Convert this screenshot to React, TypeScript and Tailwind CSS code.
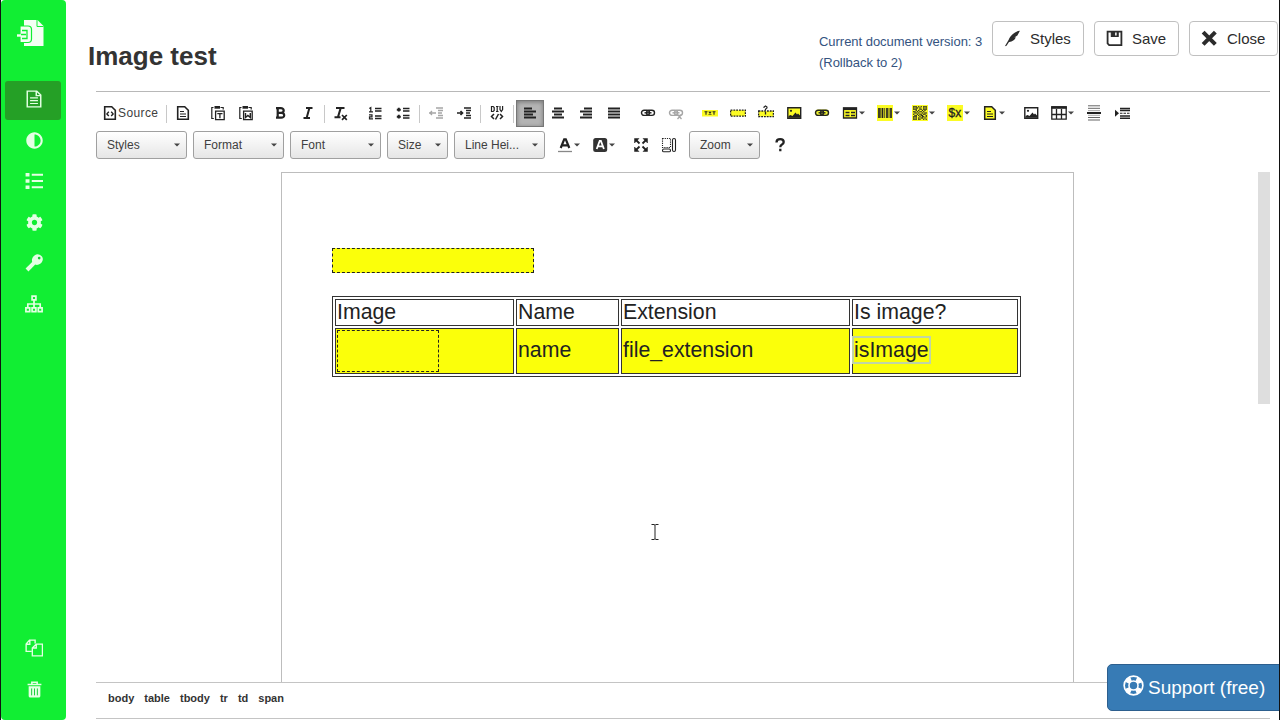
import React from 'react';
import { FaAdjust, FaCog } from 'react-icons/fa';

interface IconProps {
  children: React.ReactNode;
  className?: string;
}

function Icon({ children, className = 'w-4 h-4' }: IconProps) {
  return (
    <svg viewBox="0 0 16 16" className={`${className} shrink-0`} fill="none" stroke="currentColor">
      {children}
    </svg>
  );
}

function Caret() {
  return (
    <svg viewBox="0 0 6 4" className="w-1.5 h-1 shrink-0" fill="#444">
      <path d="M0 .5h6L3 3.5z" />
    </svg>
  );
}

interface ToolProps {
  children: React.ReactNode;
  active?: boolean;
  disabled?: boolean;
}

function Tool({ children, active, disabled }: ToolProps) {
  let stateClass = '';
  if (active) stateClass = 'bg-[#b4b4b4] border border-[#777] shadow-[inset_0_1px_4px_rgba(0,0,0,0.35)]';
  if (disabled) stateClass = 'opacity-40';
  return (
    <button className={`w-7 h-[27px] pb-px flex items-center justify-center shrink-0 ${stateClass}`}>
      <Icon>{children}</Icon>
    </button>
  );
}

function MenuTool({ children }: { children: React.ReactNode }) {
  return (
    <button className="w-[35px] h-[27px] pl-1.5 pb-px flex items-center gap-px shrink-0">
      <Icon>{children}</Icon>
      <Caret />
    </button>
  );
}

function Separator() {
  return (
    <div className="w-[5px] h-[18px] flex justify-center shrink-0">
      <div className="w-px h-full bg-[#c8c8c8]" />
    </div>
  );
}

function Combo({ label, width = 'w-[91px]' }: { label: string; width?: string }) {
  return (
    <button className={`${width} h-7 pl-2.5 pr-1.5 flex items-center justify-between shrink-0 text-xs text-[#404040] border border-[#a0a0a0] rounded-[3px] bg-linear-to-b from-white to-[#e6e6e6]`}>
      <span>{label}</span>
      <Caret />
    </button>
  );
}

const page = <path d="M2.700 1.700h7l3.600 3.600v9H2.700z" strokeWidth="1.600" />;
const clipboard = (
  <>
    <path d="M3.500 2.500H1.800v11h2M10.500 2.500h2.700v2" strokeWidth="1.200" />
    <path d="M4.500 1h5.500v2.700h-5.500z" fill="currentColor" stroke="none" />
    <path d="M5.600 6.100h8.600v8.600H5.600z" strokeWidth="1.300" />
  </>
);
const chain = (
  <g strokeWidth="1.400">
    <rect x="1.500" y="5.200" width="8" height="5.200" rx="2.600" />
    <rect x="6.500" y="5.200" width="8" height="5.200" rx="2.600" />
    <path d="M4.500 7.800h7" />
  </g>
);
const photo = (
  <>
    <path d="M1.800 2.700h12.900v10.600H1.800z" strokeWidth="1.400" />
    <circle cx="5" cy="5.800" r="1.100" fill="currentColor" stroke="none" />
    <path d="M2.500 12.800V11l2-1 2 1 3-3.500 1.500 2 1-1 2 2v2.300z" fill="currentColor" stroke="none" />
  </>
);
const indentLines = <path d="M8 3h7M10 5.500h5M10 8h4M10 10.500h5M8 13h7" strokeWidth="1.300" />;

// Black modules of the QR button, one string per row
const qrRows = [
  '11101010111',
  '10110100101',
  '11100110111',
  '00101001010',
  '11010110100',
  '01101001011',
  '10010110110',
  '01101011001',
  '11100101101',
  '10101011010',
  '11101100101',
];

function PrimaryToolbar() {
  return (
    <div className="h-[27px] flex items-center text-[#222]">
      <button className="w-[68px] h-full pl-1.5 pb-0.5 flex items-center shrink-0 text-xs tracking-[0.4px] text-[#404040]">
        <Icon className="w-4 h-4 text-[#222]">
          {page}
          <path d="M6.800 6.800L4.900 8.900l1.900 2.100M9.200 6.800l1.900 2.100-1.900 2.100" strokeWidth="1.400" />
        </Icon>
        <span>Source</span>
      </button>
      <Separator />
      <Tool>
        {page}
        <path d="M5 6.500h4M5 9h6M5 11.500h6" strokeWidth="1.200" />
      </Tool>
      <div className="flex ml-[7px]">
        <Tool>
          {clipboard}
          <path d="M7.300 8.600h5.200M9.900 8.600v4.600" strokeWidth="1.300" />
        </Tool>
        <Tool>
          {clipboard}
          <path d="M7.500 8v4.500l2.400-2 2.400 2V8" strokeWidth="1.400" />
        </Tool>
      </div>
      <div className="flex ml-1.5">
        <Tool>
          <path d="M4 3.200h4.700q3 0 3 2.300t-3 2.300H5.500M5.500 7.800h3.700q3 0 3 2.400t-3 2.400H4M5.700 3v9.500" strokeWidth="2.200" />
        </Tool>
        <Tool>
          <path d="M6 3h6.500M3.500 13H10M9.400 3L6.600 13" strokeWidth="2" />
        </Tool>
      </div>
      <Separator />
      <Tool>
        <path d="M3 3h8.500M1.500 12.300h6M7.700 3L5 12" strokeWidth="2.100" />
        <path d="M9 10l4.800 4.800M13.800 10L9 14.800" strokeWidth="1.700" />
      </Tool>
      <div className="flex ml-1.5">
        <Tool>
          <path d="M8 3.500h6.500M8 6h6.500M8 11h6.500M8 13.500h6.500" strokeWidth="1.500" />
          <path d="M2.300 3.500l1.500-1v4.300M2 6.800h4M2 9.800h3v2H2.500v2h3.500" strokeWidth="1.200" />
        </Tool>
        <Tool>
          <path d="M8 3.500h6.500M8 6h6.500M8 10.500h6.500M8 13h6.500" strokeWidth="1.500" />
          <path d="M1.800 4.700h4M1.800 11.700h4M3.800 2.800v3.800M3.800 9.800v3.800" strokeWidth="2" />
        </Tool>
      </div>
      <Separator />
      <Tool disabled>
        {indentLines}
        <path d="M1 8h7M4 6L2 8l2 2" strokeWidth="1.300" />
      </Tool>
      <Tool>
        {indentLines}
        <path d="M1 8h6M4.500 6l2 2-2 2" strokeWidth="1.700" />
      </Tool>
      <Separator />
      <Tool>
        <path d="M2.500 1.500v5h1.700l1-1v-3l-1-1zM7 1.500h2.500M8.200 1.500v5M7 6.500h2.500M11 1v3.500l1.300 2 1.300-2V1" strokeWidth="1.200" />
        <path d="M5 9l-2.500 2.500L5 14M11 9l2.500 2.500L11 14M9.500 9l-3 5.500" strokeWidth="1.500" />
      </Tool>
      <Separator />
      <Tool active>
        <path d="M2 3.500h8M2 6.500h12M2 9.500h9M2 12.500h12" strokeWidth="2" />
      </Tool>
      <Tool>
        <path d="M4 3.500h8M2 6.500h12M4 9.500h8M2 12.500h12" strokeWidth="2" />
      </Tool>
      <Tool>
        <path d="M6 3.500h8M2 6.500h12M5 9.500h9M2 12.500h12" strokeWidth="2" />
      </Tool>
      <Tool>
        <path d="M2 3.500h12M2 6.500h12M2 9.500h12M2 12.500h12" strokeWidth="2" />
      </Tool>
      <div className="flex ml-1.5">
        <Tool>{chain}</Tool>
        <Tool disabled>
          {chain}
          <path d="M9.500 9.500l4 4.500M13.500 9.500l-4 4.500" strokeWidth="1.300" />
        </Tool>
      </div>
      <div className="flex ml-1.5">
        <Tool>
          <path d="M0 5h16v6.500H0z" fill="#fbfb24" stroke="none" />
          <path d="M2.500 6.800h3M4 6.800v3M6.800 6.500l2.400 3.300M9.200 6.500L6.800 9.800M10.500 6.800h3M12 6.800v3" strokeWidth="1.100" />
        </Tool>
        <Tool>
          <path d="M.6 5.200h14.800v6H.6z" fill="#fbfb24" strokeWidth="1.300" strokeDasharray="1.800 1" />
        </Tool>
        <Tool>
          <path d="M.6 6h14.800v5.600H.6z" fill="#fbfb24" strokeWidth="1.300" strokeDasharray="1.800 1" />
          <path d="M7.500 9.500V7M7.500 5.500V4" strokeWidth="1.300" />
          <path d="M6 3V2l1.500-1L9 2v1L7.500 4" strokeWidth="1.100" />
        </Tool>
        <Tool>
          <path d="M2 3h12v10H2z" fill="#fbfb24" stroke="none" />
          {photo}
        </Tool>
        <Tool>
          <rect x="1" y="4.500" width="14" height="6.500" rx="3" fill="#f0f530" stroke="none" />
          {chain}
        </Tool>
        <MenuTool>
          <path d="M1.500 3h13v10h-13z" fill="#fbfb24" strokeWidth="1.300" />
          <path d="M1 3.800h14" strokeWidth="2.500" />
          <path d="M3.500 7.500h4M3.500 10.500h4M9 7.500h4M9 10.500h4" strokeWidth="1.500" />
        </MenuTool>
        <MenuTool>
          <path d="M0 0h16v16H0z" fill="#fbfb24" stroke="none" />
          <path d="M2 3v10M5.500 3v10M10 3v10M14 3v10" strokeWidth="1.700" />
          <path d="M3.700 3v10M7.700 3v10M12 3v10" strokeWidth=".8" />
        </MenuTool>
        <MenuTool>
          <path d="M0 0h16v16H0z" fill="#fbfb24" stroke="none" />
          <g fill="currentColor" stroke="none">
            {qrRows.map((row, y) =>
              row.split('').map((cell, x) =>
                cell === '1' ? <rect key={`${x}-${y}`} x={1.1 + x * 1.25} y={1.1 + y * 1.25} width="1.250" height="1.250" /> : null
              )
            )}
          </g>
        </MenuTool>
        <MenuTool>
          <path d="M0 0h16v16H0z" fill="#fbfb24" stroke="none" />
          <text x="1.500" y="12" fontSize="12" fontFamily="Liberation Sans, sans-serif" fill="currentColor" strokeWidth=".3">$x</text>
        </MenuTool>
        <MenuTool>
          <path d="M2.700 1.700h7l3.600 3.600v9H2.700z" fill="#fbfb24" strokeWidth="1.500" />
          <path d="M5 6.500h4M5 9h6M5 11.500h6" strokeWidth="1.200" />
        </MenuTool>
      </div>
      <div className="flex ml-1.5">
        <Tool>{photo}</Tool>
        <MenuTool>
          <path d="M.8 1.800h14.400v12.400H.8zM5.500 4v10M10.500 4v10M1 9.500h14" strokeWidth="1.300" />
          <path d="M.2 2.500h15.600" strokeWidth="2.600" />
        </MenuTool>
        <Tool>
          <path d="M2 .8h12M2 3.300h12M2 12.500h12M2 15h12" strokeWidth="1" stroke="#666" />
          <path d="M2 5.600h12M2 10.300h12" strokeWidth=".7" stroke="#888" />
          <path d="M1 8h14" strokeWidth="2" />
        </Tool>
        <Tool>
          <path d="M6 3.500h10M6 5.500h10M6 11h10M6 13.300h10" strokeWidth="1.500" />
          <path d="M6 8.200h10" strokeWidth="1.100" strokeDasharray="2.500 1" />
          <path d="M1 4.700L5 8.200 1 11.700z" fill="currentColor" stroke="none" />
        </Tool>
      </div>
    </div>
  );
}

function SecondaryToolbar() {
  return (
    <div className="h-7 mt-1 flex items-center text-[#222]">
      <div className="flex gap-1.5">
        <Combo label="Styles" />
        <Combo label="Format" />
        <Combo label="Font" />
        <Combo label="Size" width="w-[61px]" />
        <Combo label="Line Hei..." />
      </div>
      <div className="flex ml-1.5">
        <MenuTool>
          <path d="M3.700 11L7.200 2.300h1.600L12.300 11M5.200 8.300h5.600" strokeWidth="2.200" />
          <path d="M1 14.500h14" stroke="#888" strokeWidth="1.300" />
        </MenuTool>
        <MenuTool>
          <rect x="1.200" y="1" width="14" height="14" rx="2.500" fill="#333" stroke="none" />
          <path d="M4.700 12L7.700 4h1.200l3 8M5.800 9.400h5" stroke="#fff" strokeWidth="1.800" />
        </MenuTool>
      </div>
      <div className="flex ml-1.5">
        <Tool>
          <path d="M2.500 2.500l4 4M13.500 2.500l-4 4M2.500 13.500l4-4M13.500 13.500l-4-4" strokeWidth="1.800" />
          <path d="M1.500 1.500h4.500L1.500 6zM14.500 1.500V6L10 1.500zM1.500 14.500V10L6 14.500zM14.500 14.500H10l4.500-4.500z" fill="currentColor" strokeWidth=".5" />
        </Tool>
        <Tool>
          <path d="M1.500 1.500h8v9h-8z" strokeWidth="1.100" strokeDasharray="1.200 1" />
          <rect x="11.500" y="1.500" width="3" height="13" rx="1.500" strokeWidth="1.100" />
          <rect x="1.500" y="12" width="8" height="2.800" rx="1.400" strokeWidth="1.100" />
        </Tool>
      </div>
      <div className="flex ml-1.5">
        <Combo label="Zoom" width="w-[71px]" />
      </div>
      <div className="flex ml-1.5">
        <Tool>
          <path d="M4.500 5.500q0-3.300 3.700-3.300 3.500 0 3.500 2.900 0 1.500-1.700 2.400-1.700.9-1.700 2.700M8.300 11.800v2.400" strokeWidth="2.300" />
        </Tool>
      </div>
    </div>
  );
}

function SideItem({ children, active }: { children: React.ReactNode; active?: boolean }) {
  return (
    <a className={`w-14 pl-0.5 pb-[3px] flex items-center justify-center rounded-[3px] ${active ? 'h-[39px] mb-px bg-[#25a026]' : 'h-[41px]'}`}>
      {children}
    </a>
  );
}

function Sidebar() {
  return (
    <nav className="w-[65px] h-full flex flex-col items-center pr-px bg-[#11ee33] rounded-[4px] text-[#e4ffe4] shrink-0">
      <svg viewBox="0 0 28 28" className="w-7 h-7 mt-5 mb-[33px] mr-1.5 shrink-0" fill="#f4fff4">
        <path d="M8 0h13.500l6 6v20H8z" />
        <path d="M21 0v6.500h6.500" fill="none" stroke="#11ee33" strokeWidth="1" />
        <path d="M4 6h8q3.500 0 3.500 3.500v9.500q0 3.500-3.500 3.500H4z" stroke="#11ee33" strokeWidth="1.200" />
        <path d="M6 10.500h5v8H6M5 14.500h5" fill="none" stroke="#11ee33" strokeWidth="1.300" />
        <path d="M1 15.500h4" stroke="#f4fff4" strokeWidth="2.400" />
      </svg>
      <SideItem active>
        <Icon className="w-[18px] h-[18px]">
          <path d="M2 1h8.500L14 4.500V15H2zM10 1v4h4" strokeWidth="1.300" />
          <path d="M4.500 7h7M4.500 9.500h7M4.500 12h7" strokeWidth="1.100" />
        </Icon>
      </SideItem>
      <SideItem>
        <FaAdjust className="w-[17px] h-[17px]" />
      </SideItem>
      <SideItem>
        <Icon className="w-[18px] h-[18px]">
          <path d="M.5 2.500h3.500M.5 8h3.500M.5 13.500h3.500" strokeWidth="3.200" />
          <path d="M6 2.500h10M6 8h10M6 13.500h10" strokeWidth="1.700" />
        </Icon>
      </SideItem>
      <SideItem>
        <FaCog className="w-[17px] h-[17px]" />
      </SideItem>
      <SideItem>
        <Icon className="w-[18px] h-[18px]">
          <path d="M8.500 7.500L1.800 14.200" strokeWidth="3.600" />
          <ellipse cx="11" cy="5" rx="5" ry="4.500" fill="currentColor" stroke="none" transform="rotate(-35 11 5)" />
          <circle cx="12.600" cy="3.600" r="1.200" fill="#11ce33" stroke="none" />
        </Icon>
      </SideItem>
      <SideItem>
        <Icon className="w-[18px] h-[18px]">
          <path d="M6.300 1h3.400v3.400H6.300zM8 4.400v7M2.500 11V8h11v3M.8 11.500h3.400v3.300H.8zM6.300 11.500h3.400v3.300H6.300zM11.800 11.500h3.400v3.300h-3.400z" strokeWidth="1.500" />
        </Icon>
      </SideItem>
      <div className="mt-auto mb-[9px] flex flex-col">
        <SideItem>
          <Icon className="w-[18px] h-[18px]">
            <path d="M6 11H1V4.500L4 1h5v3M4.300 1v3.700H1" strokeWidth="1.200" />
            <path d="M6.500 8L10 4.500h5.500V15h-9zM10 4.500V8H6.500" strokeWidth="1.200" />
          </Icon>
        </SideItem>
        <SideItem>
          <Icon className="w-[17px] h-[17px]">
            <path d="M1.500 3.300h13M5.500 3V1.200h5V3" strokeWidth="1.500" />
            <path d="M2.500 5h11v9q0 1.500-1.500 1.500H4q-1.500 0-1.500-1.500z" fill="currentColor" stroke="none" />
            <path d="M5.300 7v6.500M8 7v6.500M10.700 7v6.500" stroke="#11ce33" strokeWidth=".9" />
          </Icon>
        </SideItem>
      </div>
    </nav>
  );
}

function HeaderButton({ label, width, children }: { label: string; width: string; children: React.ReactNode }) {
  return (
    <button className={`${width} h-[35px] pl-[11px] flex items-center gap-[9px] shrink-0 text-[15px] text-[#2c2c2c] bg-white border border-[#c0c0c0] rounded-[4px]`}>
      <Icon className="w-[17px] h-[17px]">{children}</Icon>
      <span className="pt-px">{label}</span>
    </button>
  );
}

function Header() {
  return (
    <header className="h-[92px] ml-[30px] mr-[9px] flex border-b border-[#b8b8b8]">
      <h1 className="-ml-[8px] mt-10 text-[26px] leading-8 font-bold text-[#333]">Image test</h1>
      <div className="ml-auto mt-[31px] w-[173px] shrink-0 text-[13px] leading-[21px] tracking-[-0.03px] text-[#34537f]">
        <p>Current document version: 3</p>
        <p>(Rollback to 2)</p>
      </div>
      <div className="mt-[21px] -mr-2 flex gap-2.5 shrink-0">
        <HeaderButton label="Styles" width="w-[92px]">
          <path d="M15 .8C10.500 1.200 6 4.800 4.300 9.500L.8 15.200l1.600-.3 2.300-3.700c3 .1 5.300-1.600 6.500-4.300l-1.500.2 2.900-2z" fill="currentColor" stroke="none" />
        </HeaderButton>
        <HeaderButton label="Save" width="w-[85px]">
          <path d="M1.500 1.500h13v12.700H3L1.500 12.700z" strokeWidth="1.700" />
          <path d="M5 1.500h6.500V6H5z" fill="currentColor" strokeWidth="1" />
          <path d="M9.300 2.300v2.800" stroke="#fff" strokeWidth="1.400" />
        </HeaderButton>
        <HeaderButton label="Close" width="w-[89px]">
          <path d="M2 2l11.500 11.500M13.500 2L2 13.500" strokeWidth="3.800" />
        </HeaderButton>
      </div>
    </header>
  );
}

const columns = [
  { title: 'Image', width: 'w-[179px]' },
  { title: 'Name', width: 'w-[103px]' },
  { title: 'Extension', width: 'w-[229px]' },
  { title: 'Is image?', width: 'w-[166px]' },
];

function DocumentPage() {
  return (
    <div className="w-[793px] h-full ml-[185px] pt-[75px] pl-[50px] border border-b-0 border-[#bdbdbd] text-[21.3px] leading-[23px] text-[#222]">
      <div className="w-[202px] h-[25px] bg-[#fbff0a] border border-dashed border-[#222]" />
      <table className="mt-[23px] w-[689px] table-fixed border-separate border-spacing-[2px] border border-[#333]">
        <thead>
          <tr className="h-[27px]">
            {columns.map((column) => (
              <th key={column.title} className={`${column.width} p-0 pl-px border border-[#333] text-left font-normal`}>
                {column.title}
              </th>
            ))}
          </tr>
        </thead>
        <tbody>
          <tr className="h-[46px] bg-[#fbff0a]">
            <td className="p-0 pl-px border border-[#333]">
              <div className="w-[102px] h-[42px] border border-dashed border-[#222]" />
            </td>
            <td className="p-0 pl-px pb-0.5 border border-[#333]">name</td>
            <td className="p-0 pl-px pb-0.5 border border-[#333]">file_extension</td>
            <td className="p-0 pl-px pb-0.5 border border-[#333]">
              <span className="outline-2 outline-[#c0d5a5]">isImage</span>
            </td>
          </tr>
        </tbody>
      </table>
    </div>
  );
}

function SupportButton() {
  return (
    <button className="absolute left-[1106px] top-[664px] w-[173px] h-[47px] pl-[15px] flex items-center gap-1 rounded-l-[5px] border border-[#2d5f8e] bg-[#377bb5] text-[19px] text-white">
      <svg viewBox="0 0 20 20" className="w-[21px] h-[21px] mb-1 shrink-0" fill="none" stroke="currentColor">
        <circle cx="10" cy="10" r="8.900" strokeWidth="1.600" />
        <circle cx="10" cy="10" r="4.300" strokeWidth="1.500" />
        <circle cx="10" cy="10" r="6.600" strokeWidth="4.600" strokeDasharray="5.180 5.180" strokeDashoffset="-2.590" />
      </svg>
      <span className="pt-px whitespace-nowrap">Support (free)</span>
    </button>
  );
}

const elementsPath = ['body', 'table', 'tbody', 'tr', 'td', 'span'];

export default function App() {
  return (
    <div className="relative w-[1280px] h-[720px] flex overflow-hidden bg-white border-x border-[#111] font-['Liberation_Sans',Arial,sans-serif]">
      <Sidebar />
      <main className="flex-1 min-w-0 flex flex-col">
        <Header />
        <div className="ml-[30px] mr-[9px] flex-1 min-h-0 flex flex-col">
          <div className="h-20 pt-[8px] shrink-0">
            <PrimaryToolbar />
            <SecondaryToolbar />
          </div>
          <div className="h-[510px] flex justify-between shrink-0 overflow-hidden">
            <DocumentPage />
            <div className="w-3 h-[232px] bg-[#dedede]" />
          </div>
          <div className="h-[37px] pl-3 flex items-center gap-2.5 shrink-0 border-y border-[#c4c4c4] text-[11px] font-bold text-[#333]">
            {elementsPath.map((tag) => (
              <span key={tag} className="pb-1">{tag}</span>
            ))}
          </div>
        </div>
      </main>
      <svg viewBox="0 0 8 16" className="absolute left-[650px] top-[524px] w-2 h-4" fill="none" stroke="#222">
        <path d="M.5.5h2.800l.7.700.700-.700h2.800M.5 15.500h2.800l.7-.700.700.700h2.800M4 1v14" />
      </svg>
      <SupportButton />
    </div>
  );
}
